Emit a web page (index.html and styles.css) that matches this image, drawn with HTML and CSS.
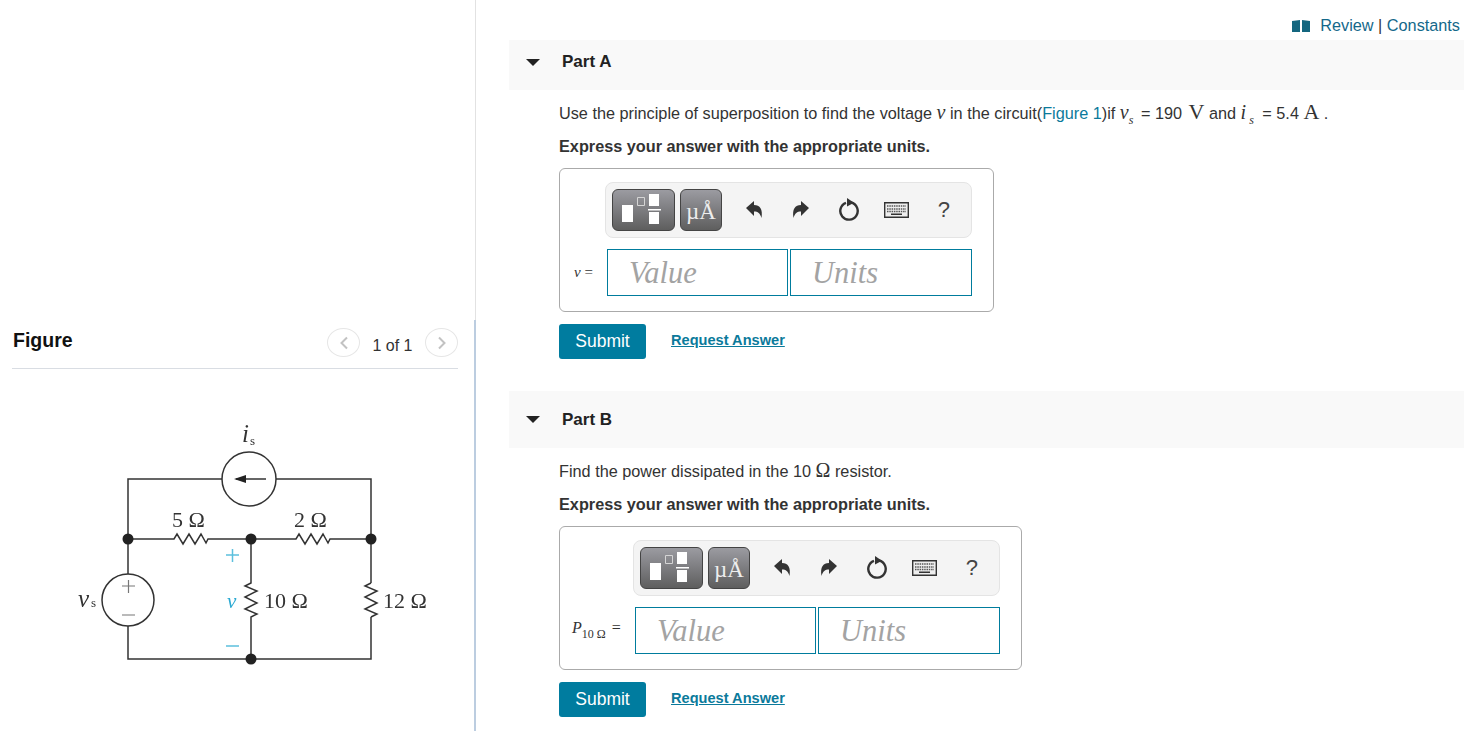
FILE: index.html
```html
<!DOCTYPE html>
<html lang="en">
  <head>
    <meta charset="UTF-8" />
    <meta name="viewport" content="width=device-width, initial-scale=1.0" />
    <title>Part A and Part B</title>
    <link rel="stylesheet" href="styles.css">
  </head>
  <body>
    <div class="page">
      <aside class="left-col">
        <div class="figure-panel">
          <div class="figure-head">
            <h2>Figure</h2>
            <div class="pager">
              <span class="pager-btn">
                <svg width="10" height="14" viewBox="0 0 10 14"><path d="M8 1.500 2.500 7 8 12.500" /></svg>
              </span>
              <span class="pager-text">1 of 1</span>
              <span class="pager-btn">
                <svg width="10" height="14" viewBox="0 0 10 14"><path d="M2 1.500 7.500 7 2 12.500" /></svg>
              </span>
            </div>
          </div>

          <svg class="circuit" width="460" height="290" viewBox="0 410 460 290">
            <g class="wire">
              <path d="M222 479H128V574M276 479H371V583M371 617V659H128V626" />
              <path d="M128 539H174l3-5 6 10 6-10 6 10 6-10 5 9 2-4H296l3-5 6 10 6-10 6 10 6-10 5 9 2-4H371" />
              <path d="M251 539V583l-6 3 12 5-12 6 12 6-12 6 12 5-6 3V659" />
              <path d="M371 583l-6 3 12 5-12 6 12 6-12 6 12 5-6 3" />
              <circle cx="249" cy="479" r="27" />
              <circle cx="128" cy="600" r="26" />
              <path d="M236 479H266" />
              <path d="M122 586h13M128.500 580v13M122 615h13" class="thin" />
            </g>
            <path class="dark" d="M234 479l12-4v8z" />
            <circle class="dark" cx="128" cy="539" r="5.500" />
            <circle class="dark" cx="251" cy="539" r="5.500" />
            <circle class="dark" cx="371" cy="539" r="5.500" />
            <circle class="dark" cx="251" cy="659" r="5.500" />
            <path class="cyan-line" d="M226 555h13M232.500 549v13M226 646h13" />
            <text x="172" y="527">5 Ω</text>
            <text x="294" y="527">2 Ω</text>
            <text x="264" y="608">10 Ω</text>
            <text x="383" y="608">12 Ω</text>
            <text x="242" y="442" class="math">i</text>
            <text x="250" y="445" class="sub">s</text>
            <text x="78" y="607" class="math">v</text>
            <text x="91" y="607" class="sub">s</text>
            <text x="227" y="608" class="math cyan">v</text>
          </svg>
        </div>
      </aside>

      <main class="right-col">
        <div class="review">
          <svg width="18" height="12" viewBox="0 0 18 12"><path d="M0 1 8 0v12H0zM10 0l8 1v11h-8z" /></svg>
          <span><a href="#">Review</a> | <a href="#">Constants</a></span>
        </div>

        <section class="part part-a">
          <div class="part-head"><span class="caret"></span>Part A</div>
          <div class="part-body">
            <p>Use the principle of superposition to find the voltage <i class="mv">v</i> in the circuit(<a href="#">Figure 1</a>)if <i class="mv">v<sub>s</sub></i> = 190 <span class="unit unit-v">V</span> and <i class="mv mv-i">i<sub>s</sub></i> = 5.4 <span class="unit">A</span> .</p>
            <p class="strong">Express your answer with the appropriate units.</p>
            <div class="answer-box">
              <div class="toolbar">
                <span class="tool-btn tool-wide">
                  <svg width="40" height="30" viewBox="0 0 40 30"><path class="w" d="M0 11h11v17H0zM27 0h10v12H27zM26 15h13v1.500H26zM27 18h10v12H27z" /><path class="o" d="M15.500 3.500h7v8h-7z" /></svg>
                </span>
                <span class="tool-btn tool-unit">µÅ</span>
                <span class="tool-icon"><svg width="18" height="20" viewBox="0 0 18 20"><path d="M1 8 9 1v4c6 0 9 4 7.500 13C15 13 13 11.500 9 11.500V16z" /></svg></span>
                <span class="tool-icon"><svg width="18" height="20" viewBox="0 0 18 20"><path d="M17 8 9 1v4C3 5 0 9 1.500 18 3 13 5 11.500 9 11.500V16z" /></svg></span>
                <span class="tool-icon"><svg width="22" height="24" viewBox="0 0 22 24"><path class="ring" d="M13 4.500a8.700 8.700 0 1 1-5 .3" /><path d="M9 0l7 4.800L9 8.500z" /></svg></span>
                <span class="tool-icon"><svg width="25" height="16" viewBox="0 0 25 16"><path class="kb" d="M.7.700h23.600v14.600H.7z" /><path class="keys" d="M3 4h19M3 7h19M3 9.500h19" /><path d="M7 11.500h11V13H7z" /></svg></span>
                <span class="tool-icon tool-help">?</span>
              </div>
              <div class="answer-label"><i>v</i> =</div>
              <div class="inputs">
                <div class="field field-value">Value</div>
                <div class="field field-units">Units</div>
              </div>
            </div>
            <div class="actions">
              <button type="button">Submit</button>
              <a href="#">Request Answer</a>
            </div>
          </div>
        </section>

        <section class="part part-b">
          <div class="part-head"><span class="caret"></span>Part B</div>
          <div class="part-body">
            <p>Find the power dissipated in the 10 <span class="unit unit-ohm">Ω</span> resistor.</p>
            <p class="strong">Express your answer with the appropriate units.</p>
            <div class="answer-box">
              <div class="toolbar">
                <span class="tool-btn tool-wide">
                  <svg width="40" height="30" viewBox="0 0 40 30"><path class="w" d="M0 11h11v17H0zM27 0h10v12H27zM26 15h13v1.500H26zM27 18h10v12H27z" /><path class="o" d="M15.500 3.500h7v8h-7z" /></svg>
                </span>
                <span class="tool-btn tool-unit">µÅ</span>
                <span class="tool-icon"><svg width="18" height="20" viewBox="0 0 18 20"><path d="M1 8 9 1v4c6 0 9 4 7.500 13C15 13 13 11.500 9 11.500V16z" /></svg></span>
                <span class="tool-icon"><svg width="18" height="20" viewBox="0 0 18 20"><path d="M17 8 9 1v4C3 5 0 9 1.500 18 3 13 5 11.500 9 11.500V16z" /></svg></span>
                <span class="tool-icon"><svg width="22" height="24" viewBox="0 0 22 24"><path class="ring" d="M13 4.500a8.700 8.700 0 1 1-5 .3" /><path d="M9 0l7 4.800L9 8.500z" /></svg></span>
                <span class="tool-icon"><svg width="25" height="16" viewBox="0 0 25 16"><path class="kb" d="M.7.700h23.600v14.600H.7z" /><path class="keys" d="M3 4h19M3 7h19M3 9.500h19" /><path d="M7 11.500h11V13H7z" /></svg></span>
                <span class="tool-icon tool-help">?</span>
              </div>
              <div class="answer-label"><i>P</i><sub>10 Ω</sub> =</div>
              <div class="inputs">
                <div class="field field-value">Value</div>
                <div class="field field-units">Units</div>
              </div>
            </div>
            <div class="actions">
              <button type="button">Submit</button>
              <a href="#">Request Answer</a>
            </div>
          </div>
        </section>
      </main>
    </div>
  </body>
</html>
```

FILE: styles.css
```css
body {
  margin: 0;
  font-family: "Liberation Sans", Arial, sans-serif;
  font-size: 16.250px;
  color: #333;
  background: #fff;
  overflow: hidden;
}
a {
  color: #0b7a9b;
  text-decoration: none;
}
.page {
  display: flex;
  height: 731px;
}

/* left side with the figure */
.left-col {
  box-sizing: border-box;
  width: 476px;
  flex-shrink: 0;
  padding-top: 320px;
  border-right: 1px solid #e2e2e2;
}
.figure-panel {
  box-sizing: border-box;
  height: 411px;
  margin-right: -1px;
  padding: 6px 0 0 12px;
  border-right: 2px solid #bccde0;
}
.figure-head {
  display: flex;
  justify-content: space-between;
  align-items: flex-start;
  width: 446px;
  height: 42px;
  border-bottom: 1px solid #d9dde3;
}
.figure-head h2 {
  margin: 2px 0 0 1px;
  font-size: 19.500px;
  line-height: 24px;
  color: #111;
}
.pager {
  display: flex;
  align-items: center;
  margin-top: 2px;
}
.pager-btn {
  display: flex;
  align-items: center;
  justify-content: center;
  box-sizing: border-box;
  width: 33px;
  height: 29px;
  border: 1px solid #e6e6e6;
  border-radius: 50%;
}
.pager-btn path {
  fill: none;
  stroke: #c2c2c2;
  stroke-width: 2;
}
.pager-text {
  width: 65px;
  padding-top: 7px;
  font-size: 16px;
  text-align: center;
}
.circuit {
  display: block;
  margin: 41px 0 0 -12px;
  filter: blur(.3px);
}
.circuit text {
  font-family: "Liberation Serif", serif;
  font-size: 22px;
  fill: #333;
}
.circuit .math {
  font-style: italic;
  font-size: 25px;
}
.circuit .sub {
  font-size: 13px;
}
.circuit .cyan {
  fill: #2aa9d2;
  font-size: 21px;
}
.wire path,
.wire circle {
  fill: none;
  stroke: #333;
  stroke-width: 1.500;
}
.wire .thin {
  stroke: #777;
  stroke-width: 1.200;
}
.dark {
  fill: #222;
}
.cyan-line {
  fill: none;
  stroke: #5cc0dd;
  stroke-width: 1.500;
}

/* right side with the parts */
.right-col {
  box-sizing: border-box;
  width: 988px;
  padding-left: 33px;
}
.review {
  display: flex;
  justify-content: flex-end;
  align-items: center;
  height: 40px;
  padding: 11px 4px 0 0;
  box-sizing: border-box;
  white-space: pre;
}
.review svg {
  margin-right: 10px;
  fill: #14667f;
}
.review a {
  color: #14688a;
}
.part-head {
  display: flex;
  align-items: center;
  height: 50px;
  padding-left: 17px;
  padding-bottom: 6px;
  box-sizing: border-box;
  background: #f9f9f9;
  font-size: 17px;
  font-weight: bold;
  color: #222;
}
.part-b {
  margin-top: 32px;
}
.part-b .part-head {
  height: 57px;
  padding-bottom: 0;
}
.caret {
  width: 0;
  height: 0;
  margin-right: 22px;
  border-top: 7px solid #222;
  border-left: 7px solid transparent;
  border-right: 7px solid transparent;
}
.part-body {
  padding: 11px 0 0 50px;
}
.part-body p {
  margin: 0 0 9px;
  line-height: 24px;
  white-space: nowrap;
}
.part-body .strong {
  margin-bottom: 10px;
  font-weight: bold;
}
.mv {
  font-family: "Liberation Serif", serif;
  font-size: 20px;
  line-height: 0;
}
.mv sub {
  margin-right: 3px;
  font-size: 12px;
  line-height: 0;
}
.mv-i sub {
  margin-left: 3px;
  margin-right: 4px;
}
.unit {
  font-family: "Liberation Serif", serif;
  font-size: 22px;
  line-height: 0;
}
.unit-v {
  margin-left: 2px;
}
.unit-ohm {
  font-size: 20px;
}

/* answer box */
.answer-box {
  display: inline-grid;
  grid-template-columns: auto auto;
  column-gap: 12px;
  row-gap: 11px;
  box-sizing: border-box;
  height: 144px;
  padding: 13px 21px 15px 14px;
  border: 1px solid #aaa;
  border-radius: 6px;
  vertical-align: top;
}
.part-a .answer-label {
  width: 21px;
}
.part-b .answer-label {
  width: 51px;
  margin-left: -2px;
  font-size: 16px;
}
.toolbar {
  grid-column: 2;
  display: flex;
  align-items: center;
  box-sizing: border-box;
  width: 367px;
  height: 56px;
  margin-left: -2px;
  padding-left: 6px;
  background: #f4f4f4;
  border: 1px solid #e4e4e4;
  border-radius: 8px;
}
.tool-btn {
  display: flex;
  align-items: center;
  justify-content: center;
  box-sizing: border-box;
  height: 42px;
  border: 1px solid #444;
  border-radius: 6px;
  background: linear-gradient(#9b9ba1, #5e5e5e);
}
.tool-wide {
  width: 63px;
}
.tool-wide svg {
  margin: 0 3px 3px 0;
}
.tool-wide .w {
  fill: #fff;
}
.tool-wide .o {
  fill: none;
  stroke: #d5d5d5;
}
.tool-unit {
  width: 42px;
  margin-left: 5px;
  margin-right: 8px;
  padding-top: 4px;
  font-family: "Liberation Serif", serif;
  font-size: 23px;
  color: #eee;
}
.tool-icon {
  display: flex;
  align-items: center;
  justify-content: center;
  width: 47.500px;
  fill: #333;
}
.ring {
  fill: none;
  stroke: #333;
  stroke-width: 2.400;
}
.kb {
  fill: #eee;
  stroke: #333;
  stroke-width: 1.400;
}
.keys {
  fill: none;
  stroke: #555;
  stroke-width: 1.500;
  stroke-dasharray: 1.500 .800;
}
.tool-help {
  font-size: 22px;
  color: #444;
}
.answer-label {
  align-self: center;
  font-family: "Liberation Serif", serif;
  font-size: 15px;
  white-space: nowrap;
}
.answer-label sub {
  margin-right: 2px;
  font-size: 12px;
}
.inputs {
  display: flex;
  gap: 2px;
}
.field {
  box-sizing: border-box;
  height: 47px;
  padding-left: 21px;
  border: 1px solid #007c9d;
  font-family: "Liberation Serif", serif;
  font-size: 30.500px;
  font-style: italic;
  line-height: 46px;
  color: #a3a3a3;
}
.field-value {
  width: 181px;
}
.field-units {
  width: 182px;
}
.actions {
  display: flex;
  align-items: center;
  gap: 25px;
  margin-top: 12px;
}
.actions button {
  width: 87px;
  height: 35px;
  padding: 0;
  background: #007c9f;
  border: none;
  border-radius: 3px;
  font-family: inherit;
  font-size: 17.500px;
  color: #fff;
}
.actions a {
  margin-bottom: 4px;
  font-size: 14.600px;
  font-weight: bold;
  text-decoration: underline;
}
```
